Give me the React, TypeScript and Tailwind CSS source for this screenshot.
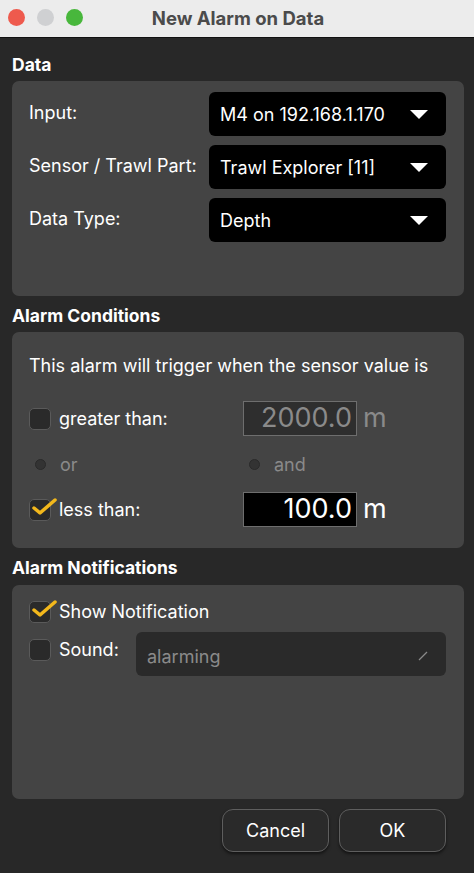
import React from "react";

const FONT = { fontFamily: 'Inter, "Liberation Sans", Arial, sans-serif' };

function Dropdown({ value }: { value: string }) {
  return (
    <div className="flex h-[44px] w-[237px] items-center justify-between rounded-[6px] bg-black pl-[11px] pr-[18px] text-[18px] text-white">
      <span>{value}</span>
      <svg width="18" height="9" viewBox="0 0 18 9">
        <polygon points="0,0 18,0 9,9" fill="#fff" />
      </svg>
    </div>
  );
}

function Checkbox({ checked }: { checked?: boolean }) {
  return (
    <div className="relative h-[22px] w-[22px] shrink-0 rounded-[5px] border border-[#5a5a5a] bg-[#2a2a2a]">
      {checked && (
        <svg
          className="absolute left-[1px] top-[-5px]"
          width="26"
          height="24"
          viewBox="0 0 26 24"
        >
          <path
            d="M3 13 L9 18 L24 5"
            fill="none"
            stroke="#f3b81c"
            strokeWidth="3.5"
            strokeLinecap="round"
            strokeLinejoin="round"
          />
        </svg>
      )}
    </div>
  );
}

function Radio() {
  return <div className="h-[11px] w-[11px] rounded-full border border-[#2a2a2a] bg-[#333]" />;
}

export default function App() {
  return (
    <div className="flex h-[873px] w-[474px] flex-col bg-[#282828]" style={FONT}>
      {/* title bar */}
      <div className="relative flex h-[38px] shrink-0 items-center justify-center border-b border-[#111] bg-[#ececec]">
        <div className="absolute left-[8px] top-[9px] flex gap-[12px]">
          <div className="h-[17px] w-[17px] rounded-full bg-[#ee5a4d]" />
          <div className="h-[17px] w-[17px] rounded-full bg-[#cfd0d2]" />
          <div className="h-[17px] w-[17px] rounded-full bg-[#48b73c]" />
        </div>
        <span className="pl-[2px] text-[18.5px] font-bold text-[#4b4b4b]">New Alarm on Data</span>
      </div>

      <div className="flex flex-1 flex-col pl-[12px] pr-[10px] pt-[17px]">
        {/* Data */}
        <h2 className="h-[26px] text-[17.5px] font-bold leading-[20px] text-white">Data</h2>
        <div className="flex h-[215px] flex-col gap-[9px] rounded-[7px] bg-[#444444] pl-[17px] pr-[18px] pt-[11px]">
          {[
            ["Input:", "M4 on 192.168.1.170"],
            ["Sensor / Trawl Part:", "Trawl Explorer [11]"],
            ["Data Type:", "Depth"],
          ].map(([label, value]) => (
            <div key={label} className="flex items-center justify-between">
              <span className="pb-[3px] text-[18px] text-white">{label}</span>
              <Dropdown value={value} />
            </div>
          ))}
        </div>

        {/* Alarm Conditions */}
        <h2 className="mt-[12px] h-[24px] text-[17.5px] font-bold leading-[16px] text-white">Alarm Conditions</h2>
        <div className="flex h-[216px] flex-col rounded-[7px] bg-[#444444] pl-[17px] pt-[23px]">
          <p className="h-[22px] text-[18px] leading-[22px] text-white">
            This alarm will trigger when the sensor value is
          </p>
          <div className="mt-[24px] flex h-[35px] items-center">
            <div className="flex w-[214px] items-center gap-[8px]">
              <Checkbox />
              <span className="text-[18px] text-white">greater than:</span>
            </div>
            <div className="flex h-[35px] w-[114px] items-center justify-end border border-[#6e6e6e] bg-[#2e2e2e] pr-[4px] text-[27px] text-[#8a8a8a]">
              2000.0
            </div>
            <span className="ml-[6px] pb-[1px] text-[27px] text-[#8a8a8a]">m</span>
          </div>
          <div className="mt-[18px] flex h-[20px] items-center">
            <div className="flex w-[214px] items-center gap-[14px] pl-[6px]">
              <Radio />
              <span className="text-[18px] text-[#8a8a8a]">or</span>
            </div>
            <div className="flex items-center gap-[14px] pl-[6px]">
              <Radio />
              <span className="text-[18px] text-[#8a8a8a]">and</span>
            </div>
          </div>
          <div className="mt-[18px] flex h-[35px] items-center">
            <div className="flex w-[214px] items-center gap-[8px]">
              <Checkbox checked />
              <span className="text-[18px] text-white">less than:</span>
            </div>
            <div className="flex h-[35px] w-[114px] items-center justify-end border border-[#6e6e6e] bg-black pr-[4px] text-[27px] text-white">
              100.0
            </div>
            <span className="ml-[6px] pb-[1px] text-[27px] text-white">m</span>
          </div>
        </div>

        {/* Alarm Notifications */}
        <h2 className="mt-[12px] h-[25px] text-[17.5px] font-bold leading-[16px] text-white">Alarm Notifications</h2>
        <div className="flex h-[214px] flex-col rounded-[7px] bg-[#444444] pl-[17px] pr-[18px] pt-[13px]">
          <div className="flex items-center gap-[8px]">
            <Checkbox checked />
            <span className="text-[18px] text-white">Show Notification</span>
          </div>
          <div className="mt-[7px] flex items-start">
            <div className="flex w-[107px] items-center gap-[8px] pt-[4px]">
              <Checkbox />
              <span className="text-[18px] text-white">Sound:</span>
            </div>
            <div className="flex h-[44px] flex-1 items-center justify-between rounded-[6px] bg-[#2a2a2a] pl-[11px] pr-[18px] pt-[4px] text-[18px] text-[#8a8a8a]">
              <span>alarming</span>
              <svg width="10" height="10" viewBox="0 0 10 10">
                <line x1="1" y1="9" x2="9" y2="1" stroke="#8a8a8a" strokeWidth="1.3" />
              </svg>
            </div>
          </div>
        </div>

        {/* buttons */}
        <div className="mt-[10px] flex justify-end gap-[10px] pr-[18px]">
          <button className="h-[43px] w-[107px] rounded-[11px] border border-[#5e5e5e] bg-[#2a2a2a] text-[18px] text-white shadow-[0_2px_3px_rgba(0,0,0,0.5)]">
            Cancel
          </button>
          <button className="h-[43px] w-[107px] rounded-[11px] border border-[#5e5e5e] bg-[#2a2a2a] text-[18px] text-white shadow-[0_2px_3px_rgba(0,0,0,0.5)]">
            OK
          </button>
        </div>
      </div>
    </div>
  );
}
